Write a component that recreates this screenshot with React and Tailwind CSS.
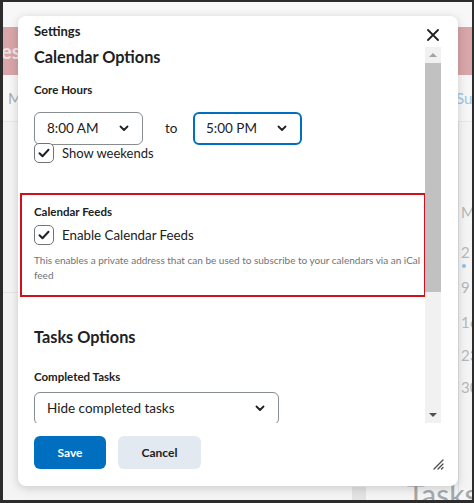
import React from 'react';

const font = { fontFamily: 'Lato, "Open Sans", sans-serif' };

function Chevron() {
    return (
        <svg width="10" height="7" viewBox="0 0 10 7" fill="none" className="shrink-0">
            <path d="M1.5 1.5L5 5l3.5-3.5" stroke="#202122" strokeWidth="1.8" strokeLinecap="round" strokeLinejoin="round" />
        </svg>
    );
}

function Checkbox() {
    return (
        <span className="flex h-5 w-5 shrink-0 items-center justify-center rounded-[5px] border border-[#6e7477] bg-white">
            <svg width="12" height="10" viewBox="0 0 12 10" fill="none">
                <path d="M1.5 5.2l3 3L10.5 1.8" stroke="#202122" strokeWidth="2" strokeLinecap="round" strokeLinejoin="round" />
            </svg>
        </span>
    );
}

function Select({ label, width, active }) {
    return (
        <div
            className={
                'flex h-[33px] items-center justify-between rounded-md bg-white pl-3 pr-[13px] text-[13.5px] text-[#202122] ' +
                (active ? 'border-2 border-[#006fbf] pl-[11px] pr-[12px]' : 'border border-[#868c8f]')
            }
            style={{ width }}
        >
            <span>{label}</span>
            <Chevron />
        </div>
    );
}

function Scrollbar() {
    return (
        <div className="flex h-[376px] w-4 flex-col bg-[#f1f1f1]">
            <div className="flex h-4 items-center justify-center">
                <span className="h-0 w-0 border-x-4 border-b-4 border-x-transparent border-b-[#a3a3a3]" />
            </div>
            <div className="h-[229px] bg-[#c1c1c1]" />
            <div className="flex-1" />
            <div className="flex h-4 items-center justify-center">
                <span className="h-0 w-0 border-x-4 border-t-4 border-x-transparent border-t-[#505050]" />
            </div>
        </div>
    );
}

function SettingsDialog() {
    return (
        <div
            className="absolute left-[15px] top-[14px] flex h-[470px] w-[440px] flex-col rounded-lg bg-white shadow-[0_2px_10px_rgba(0,0,0,0.18)]"
            style={font}
        >
            <div className="flex h-[407px]">
                {/* scrolling content */}
                <div className="flex w-[407px] flex-col overflow-hidden pt-[7px] text-[#202122]">
                    <div className="pl-4 text-[13px] font-bold leading-4">Settings</div>
                    <h2 className="mt-[6px] pl-4 text-[16.3px] font-bold leading-6">Calendar Options</h2>

                    <div className="mt-[13px] pl-4 text-[11.5px] font-bold leading-4">Core Hours</div>
                    <div className="mt-[14px] flex items-center pl-4">
                        <Select label="8:00 AM" width={109} />
                        <span className="ml-[22px] mr-4 w-3 text-[13.5px]">to</span>
                        <Select label="5:00 PM" width={109} active />
                    </div>
                    <label className="-mt-[2px] flex items-center gap-2 pl-4 text-[13px] leading-5">
                        <Checkbox />
                        <span>Show weekends</span>
                    </label>

                    <div className="ml-[2px] mt-[30px] w-[406px] border-2 border-[#d0101b] pb-3 pl-3 pt-[9px]">
                        <div className="text-[11.5px] font-bold leading-4">Calendar Feeds</div>
                        <label className="mt-[5px] flex items-center gap-2 text-[13.3px] leading-5">
                            <Checkbox />
                            <span>Enable Calendar Feeds</span>
                        </label>
                        <p className="mt-2 w-[392px] text-[10px] leading-[15px] text-[#6e7477]">
                            This enables a private address that can be used to subscribe to your calendars via an iCal feed
                        </p>
                    </div>

                    <div className="ml-4 mt-[10px] h-px bg-[#e3e9f1]" />

                    <h2 className="mt-[18px] pl-4 text-[16.3px] font-bold leading-6">Tasks Options</h2>
                    <div className="mt-5 pl-4 text-[11.5px] font-bold leading-4">Completed Tasks</div>
                    <div className="mt-[7px] pl-4">
                        <Select label="Hide completed tasks" width={245} />
                    </div>
                </div>

                {/* close + scrollbar */}
                <div className="flex w-4 flex-col">
                    <button className="flex h-[31px] items-start justify-center pt-[13px]">
                        <svg width="12" height="12" viewBox="0 0 12 12" fill="none">
                            <path d="M1 1l10 10M11 1L1 11" stroke="#202122" strokeWidth="1.8" strokeLinecap="round" />
                        </svg>
                    </button>
                    <Scrollbar />
                </div>
            </div>

            <div className="relative flex flex-1 items-start gap-3 pl-4 pt-[13px]">
                <button className="h-[33px] w-[72px] rounded-md bg-[#006fbf] text-[12px] font-bold text-white">Save</button>
                <button className="h-[33px] w-[83px] rounded-md bg-[#e3e9f1] text-[12px] font-bold text-[#202122]">Cancel</button>
                <svg className="absolute bottom-[16px] right-[14px]" width="11" height="11" viewBox="0 0 11 11" fill="none">
                    <path d="M1 10L10 1M5 10l5-5M8.5 10l1.5-1.5" stroke="#494c4e" strokeWidth="1.3" strokeLinecap="round" />
                </svg>
            </div>
        </div>
    );
}

// day numbers down the right edge of the calendar behind the dialog
const days = [
    { label: 'Mo', h: 'h-[40px]' },
    { label: '2', h: 'h-[35px]', dot: true },
    { label: '9', h: 'h-[35px]' },
    { label: '16', h: 'h-[33px]' },
    { label: '23', h: 'h-[32px]' },
    { label: '30', h: 'h-[32px]' },
];

export default function App() {
    return (
        <div className="h-[503px] w-[474px] overflow-hidden border-b-[3px] border-l-[3px] border-r-2 border-t-2 border-[#2c2c2c]" style={font}>
            <div className="relative flex h-full flex-col bg-[#f4f4f4]">
                {/* page behind the dialog */}
                <div className="h-[25px] bg-[#f7f7f7]" />
                <div className="flex h-[48px] items-center bg-[#d8a5a8]">
                    <span className="-ml-[2px] text-[20px] font-bold text-[#f3e3e4]">es</span>
                </div>
                <div className="flex h-[47px] items-center justify-between border-b border-[#e8e8e8] bg-[#f6f6f6]">
                    <span className="ml-[5px] text-[15px] text-[#a7acaf]">M</span>
                    <span className="-mr-1 text-[15px] text-[#9cc6e6]">Sul</span>
                </div>
                <div className="flex flex-1">
                    <div className="flex w-[455px] shrink-0 flex-col">
                        <div className="mt-[170px] h-px w-[15px] bg-[#e6e6e6]" />
                        <div className="ml-[349px] mt-auto h-[13px] w-[14px] bg-[#e2e2e2]" />
                    </div>
                    <div className="flex min-w-0 flex-1 flex-col border-l border-[#e2e5e8] pl-[2px] pt-[80px] text-[15px] leading-5 whitespace-nowrap text-[#b4b8bb]">
                        {days.map((d) => (
                            <div key={d.label} className={'relative ' + d.h}>
                                <span>{d.label}</span>
                                {d.dot && <span className="absolute left-[1px] top-[22px] h-[4px] w-[4px] rounded-full bg-[#8fbfe6]" />}
                            </div>
                        ))}
                    </div>
                </div>
                <span className="absolute bottom-[-10px] left-[404px] text-[30px] leading-8 text-[#a4a8ab]">Tasks</span>

                <SettingsDialog />
            </div>
        </div>
    );
}
